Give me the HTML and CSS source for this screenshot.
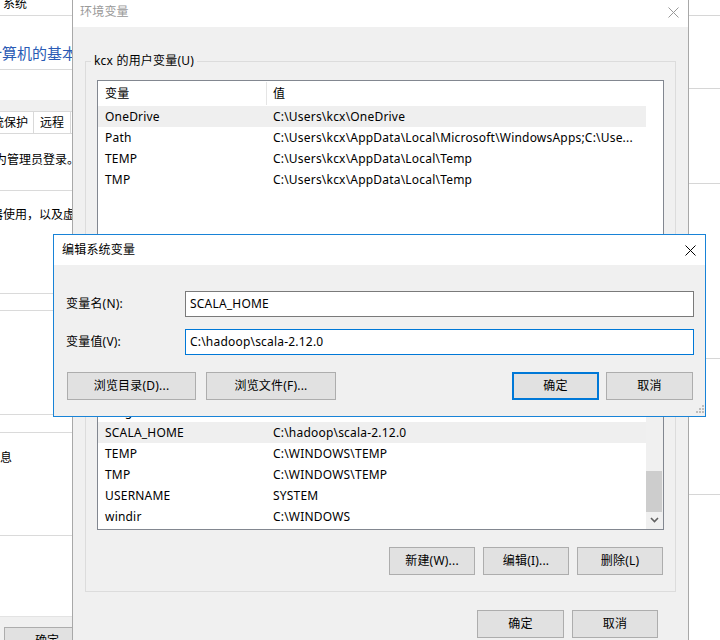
FILE: index.html
```html
<!DOCTYPE html>
<html lang="zh-CN">
<head>
<meta charset="utf-8">
<title>环境变量</title>
<link rel="stylesheet" href="styles.css">
</head>
<body>
<div class="desk">
  <div class="syswin">
    <div class="sys-left">
      <div class="sl r1"><div class="cap">系统</div></div>
      <div class="sl r2"><div class="headline">计算机的基本信息</div></div>
      <div class="r3"></div>
      <div class="band"></div>
      <div class="tabs">
        <div class="tab tab1"><span>系统保护</span></div>
        <div class="tab tab2">远程</div>
      </div>
      <div class="sl r4"><div class="txt ind-a">作为管理员登录。</div></div>
      <div class="sl r5"><div class="txt ind-b">器使用，以及虚拟内存</div></div>
      <div class="sl r6"></div>
      <div class="sl r7"></div>
      <div class="sl r8"></div>
      <div class="sl r9"><div class="txt ind-c">信息</div></div>
      <div class="r10"></div>
      <div class="sys-foot"><button class="btn foot-btn">确定</button></div>
    </div>
    <div class="sys-gap"></div>
    <div class="sys-right">
      <div class="sr h1"></div>
      <div class="sr h2"></div>
      <div class="sr h3"></div>
      <div class="sr h4"></div>
      <div class="sr h5"></div>
    </div>
  </div>

  <div class="envwin">
    <div class="titlebar env-title">
      <span class="title-text">环境变量</span>
      <svg class="close" width="11" height="11" viewBox="0 0 11 11"><path d="M0.5 0.5 L10.5 10.5 M10.5 0.5 L0.5 10.5" stroke="#999" stroke-width="1" fill="none"/></svg>
    </div>
    <div class="env-body">
      <fieldset class="group">
        <legend>kcx 的用户变量(U)</legend>
        <div class="list user-list">
          <div class="lv">
            <div class="lv-head"><div class="c1">变量</div><div class="c2">值</div></div>
            <div class="lv-rows">
              <div class="row sel"><div class="c1">OneDrive</div><div class="c2">C:\Users\kcx\OneDrive</div></div>
              <div class="row"><div class="c1">Path</div><div class="c2">C:\Users\kcx\AppData\Local\Microsoft\WindowsApps;C:\Use...</div></div>
              <div class="row"><div class="c1">TEMP</div><div class="c2">C:\Users\kcx\AppData\Local\Temp</div></div>
              <div class="row"><div class="c1">TMP</div><div class="c2">C:\Users\kcx\AppData\Local\Temp</div></div>
            </div>
          </div>
          <div class="vblank"></div>
        </div>
        <div class="group-btns">
          <button class="btn gbtn">新建(N)...</button>
          <button class="btn gbtn">编辑(E)...</button>
          <button class="btn gbtn">删除(D)</button>
        </div>
      </fieldset>

      <fieldset class="group sys-group">
        <legend>系统变量(S)</legend>
        <div class="list sys-list">
          <div class="lv">
            <div class="lv-head"><div class="c1">变量</div><div class="c2">值</div></div>
            <div class="lv-rows scrolled">
              <div class="row"><div class="c1">NUMBER_OF_PROCESSORS</div><div class="c2">4</div></div>
              <div class="row"><div class="c1">OS</div><div class="c2">Windows_NT</div></div>
              <div class="row"><div class="c1">Path</div><div class="c2">C:\ProgramData\Oracle\Java\javapath;C:\WINDOWS\system32</div></div>
              <div class="row"><div class="c1">PATHEXT</div><div class="c2">.COM;.EXE;.BAT;.CMD;.VBS;.VBE;.JS;.JSE;.WSF;.WSH;.MSC</div></div>
              <div class="row"><div class="c1">ProgramData</div><div class="c2">C:\WINDOWS\ROOT</div></div>
              <div class="row sel"><div class="c1">SCALA_HOME</div><div class="c2">C:\hadoop\scala-2.12.0</div></div>
              <div class="row"><div class="c1">TEMP</div><div class="c2">C:\WINDOWS\TEMP</div></div>
              <div class="row"><div class="c1">TMP</div><div class="c2">C:\WINDOWS\TEMP</div></div>
              <div class="row"><div class="c1">USERNAME</div><div class="c2">SYSTEM</div></div>
              <div class="row"><div class="c1">windir</div><div class="c2">C:\WINDOWS</div></div>
            </div>
          </div>
          <div class="vscroll">
            <div class="sb-arrow">
              <svg width="17" height="17" viewBox="0 0 17 17"><polyline points="5,10 8.5,6.5 12,10" fill="none" stroke="#606060" stroke-width="1.6"/></svg>
            </div>
            <div class="sb-track"><div class="sb-thumb"></div></div>
            <div class="sb-arrow">
              <svg width="17" height="17" viewBox="0 0 17 17"><polyline points="5,6 8.5,9.5 12,6" fill="none" stroke="#606060" stroke-width="1.6"/></svg>
            </div>
          </div>
        </div>
        <div class="group-btns">
          <button class="btn gbtn">新建(W)...</button>
          <button class="btn gbtn">编辑(I)...</button>
          <button class="btn gbtn">删除(L)</button>
        </div>
      </fieldset>

      <div class="env-foot">
        <button class="btn ok-btn">确定</button>
        <button class="btn cancel-btn">取消</button>
      </div>
    </div>
  </div>

  <div class="dialog">
    <div class="titlebar dlg-title">
      <span class="title-text">编辑系统变量</span>
      <svg class="close" width="11" height="11" viewBox="0 0 11 11"><path d="M0.5 0.5 L10.5 10.5 M10.5 0.5 L0.5 10.5" stroke="#000" stroke-width="1" fill="none"/></svg>
    </div>
    <div class="dlg-body">
      <div class="form">
        <label class="flabel">变量名(N):</label>
        <div class="input">SCALA_HOME</div>
        <label class="flabel">变量值(V):</label>
        <div class="input focus">C:\hadoop\scala-2.12.0</div>
      </div>
      <div class="dlg-btns">
        <div class="bgroup left">
          <button class="btn browse1">浏览目录(D)...</button>
          <button class="btn browse2">浏览文件(F)...</button>
        </div>
        <div class="bgroup right">
          <button class="btn dbtn default">确定</button>
          <button class="btn dbtn">取消</button>
        </div>
      </div>
    </div>
    <svg class="grip" width="9" height="9" viewBox="0 0 9 9">
      <rect x="7" y="0" width="2" height="2" fill="#bdbdbd"/>
      <rect x="4" y="3" width="2" height="2" fill="#bdbdbd"/>
      <rect x="7" y="3" width="2" height="2" fill="#bdbdbd"/>
      <rect x="1" y="6" width="2" height="2" fill="#bdbdbd"/>
      <rect x="4" y="6" width="2" height="2" fill="#bdbdbd"/>
      <rect x="7" y="6" width="2" height="2" fill="#bdbdbd"/>
    </svg>
  </div>
</div>
</body>
</html>
```
FILE: styles.css
```css
* { box-sizing: border-box; }
html, body { margin: 0; padding: 0; }
body {
  width: 720px;
  height: 640px;
  overflow: hidden;
  background: #fff;
  font-family: "Noto Sans", "Noto Sans CJK SC", sans-serif;
  font-size: 12px;
  letter-spacing: 0.2px;
  color: #000;
}
.desk { position: relative; width: 720px; height: 640px; overflow: hidden; }

/* background system window */
.syswin {
  position: absolute; left: 0; top: 0;
  width: 720px; height: 640px;
  display: flex; background: #fff;
}
.sys-left { width: 72px; flex: none; display: flex; flex-direction: column; overflow: hidden; letter-spacing: 0; }
.sys-gap { flex: 1; }
.sys-right { width: 32px; flex: none; display: flex; flex-direction: column; }
.sl { flex: none; border-bottom: 1px solid #dadada; overflow: hidden; white-space: nowrap; }
.r1 { height: 16px; }
.cap { margin-top: -4px; line-height: 16px; padding-left: 3px; }
.r2 { height: 54px; padding-top: 27px; }
.headline { font-size: 15px; line-height: 20px; color: #2a5bb5; text-indent: -13px; }
.r3 { height: 30px; flex: none; }
.band { height: 11px; flex: none; background: #f0f0f0; }
.tabs {
  height: 23px; flex: none; display: flex;
  border-top: 1px solid #d9d9d9; border-bottom: 1px solid #d9d9d9;
  line-height: 21px; white-space: nowrap;
}
.tab { border-right: 1px solid #d9d9d9; }
.tab1 { width: 34px; flex: none; display: flex; justify-content: flex-end; padding-right: 5px; overflow: hidden; }
.tab2 { padding: 0 6px; flex: none; }
.txt { line-height: 16px; }
.r4 { height: 57px; padding-top: 18px; }
.ind-a { text-indent: -17px; }
.r5 { height: 103px; padding-top: 16px; }
.ind-b { text-indent: -9px; }
.r6 { height: 17px; }
.r7 { height: 104px; }
.r8 { height: 18px; }
.r9 { height: 103px; padding-top: 17px; }
.ind-c { text-indent: -12px; }
.r10 { height: 80px; flex: none; }
.sys-foot {
  flex: 1; background: #f0f0f0; border-top: 1px solid #e3e3e3;
  padding: 10px 0 0 4px;
}
.foot-btn { width: 86px; }
.sr { flex: none; border-bottom: 1px solid #d6d6d6; }
.h1 { height: 16px; }
.h2 { height: 73px; }
.h3 { height: 95px; }
.h4 { height: 175px; }
.h5 { height: 136px; }

/* buttons */
.btn {
  font-family: inherit; font-size: 12px; color: #000; letter-spacing: inherit;
  height: 28px; padding: 0; margin: 0;
  background: #e1e1e1; border: 1px solid #adadad;
  display: flex; align-items: center; justify-content: center;
  line-height: 16px; white-space: nowrap; flex: none;
}

/* title bars */
.titlebar {
  height: 30px; flex: none; background: #fff;
  display: flex; align-items: center;
}
.title-text { line-height: 16px; }
.close { margin-left: auto; margin-right: 9px; flex: none; display: block; }

/* environment window */
.envwin {
  position: absolute; left: 72px; top: -4px;
  width: 617px; height: 660px;
  border: 1px solid #a8a8a8; background: #f0f0f0;
  display: flex; flex-direction: column;
}
.env-title { padding-left: 7px; }
.env-title .title-text { color: #999; }
.env-body { padding: 26px 12px 0; display: flex; flex-direction: column; }
.group {
  margin: 0; min-width: 0;
  padding: 0 11px 16px;
  border: 1px solid #dcdcdc;
}
.group legend {
  padding: 0 3px; margin-left: -6px;
  line-height: 16px; font-size: 12px;
}
.sys-group { margin-top: 9px; }
.list {
  margin-top: 11px;
  border: 1px solid #828790; background: #fff;
  display: flex;
}
.user-list { height: 171px; }
.sys-list { height: 181px; }
.lv { flex: 1; min-width: 0; display: flex; flex-direction: column; }
.lv-head { height: 25px; flex: none; display: flex; line-height: 25px; }
.lv-head .c1 { height: 23px; margin: 1px 0; line-height: 23px; border-right: 1px solid #e5e5e5; }
.c1 { width: 169px; flex: none; padding-left: 7px; white-space: nowrap; overflow: hidden; }
.c2 { flex: 1; min-width: 0; padding-left: 6px; white-space: nowrap; overflow: hidden; text-overflow: clip; }
.lv-rows { display: flex; flex-direction: column; }
.scrolled { flex: 1; min-height: 0; overflow: hidden; justify-content: flex-end; padding-bottom: 2px; }
.row { height: 21px; flex: none; display: flex; line-height: 21px; }
.row.sel { background: #efefef; }
.vblank { width: 17px; flex: none; }
.vscroll { width: 17px; flex: none; background: #f0f0f0; display: flex; flex-direction: column; }
.sb-arrow { height: 17px; flex: none; }
.sb-arrow svg { display: block; }
.sb-track { flex: 1; display: flex; flex-direction: column; justify-content: flex-end; }
.sb-thumb { height: 41px; margin: 0 1px 0 0; background: #cdcdcd; }
.group-btns { margin-top: 17px; display: flex; justify-content: flex-end; gap: 8px; padding-right: 1px; }
.gbtn { width: 86px; }
.env-foot { margin-top: 18px; display: flex; justify-content: flex-end; gap: 8px; padding-right: 18px; }
.ok-btn { width: 87px; }
.cancel-btn { width: 86px; }

/* edit dialog */
.dialog {
  position: absolute; left: 53px; top: 234px;
  width: 653px; height: 183px;
  border: 1px solid #1883d7; background: #f0f0f0;
  display: flex; flex-direction: column;
}
.dlg-title { padding-left: 8px; }
.dlg-body { padding: 26px 11px 16px 12px; }
.form { display: grid; grid-template-columns: 119px 1fr; row-gap: 12px; }
.flabel { line-height: 26px; height: 26px; white-space: nowrap; }
.input {
  height: 26px; background: #fff; border: 1px solid #7a7a7a;
  padding-left: 4px; line-height: 24px; white-space: nowrap;
}
.input.focus { border-color: #0078d7; }
.dlg-btns { margin-top: 17px; display: flex; }
.bgroup { display: flex; }
.bgroup.left { margin-left: 1px; gap: 10px; }
.bgroup.right { margin-left: auto; margin-right: 1px; gap: 7px; }
.browse1 { width: 129px; }
.browse2 { width: 130px; }
.dbtn { width: 87px; }
.dbtn.default { border: 2px solid #0078d7; }
.grip { position: absolute; right: 1px; bottom: 2px; display: block; }
```
